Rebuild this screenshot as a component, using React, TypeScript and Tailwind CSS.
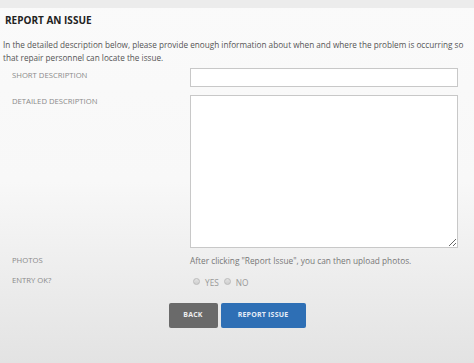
import React, { useState } from 'react';

const font = { fontFamily: '"Open Sans", "Liberation Sans", sans-serif' };

export default function App() {
  const [entryOk, setEntryOk] = useState<string>('');

  return (
    <div
      className="w-[474px] h-[363px] overflow-hidden bg-gradient-to-b from-[#fafafa] via-[#f8f8f8] to-[#e3e3e3] text-[#333]"
      style={font}
    >
      {/* top strip */}
      <div className="h-[8px] bg-[#ececec]" />

      <div className="pl-[5px]">
        <h1 className="mt-[5px] text-[10px] font-bold leading-[14px] text-[#222]">REPORT AN ISSUE</h1>

        <p className="mt-[11px] text-[8.2px] leading-[13px] text-[#555] -ml-[2px]">
          In the detailed description below, please provide enough information about when and where the problem is occurring so
          that repair personnel can locate the issue.
        </p>
      </div>

      {/* form rows */}
      <div className="mt-[4px] grid grid-cols-[190px_268px] gap-y-[8px] text-[7.7px] text-[#8a8a8a]">
        <label className="pl-[12px] pt-[2px] leading-[10px]">SHORT DESCRIPTION</label>
        <input className="h-[19px] bg-white border border-[#c8c8c8] outline-none" />

        <label className="pl-[12px] pt-[1px] leading-[10px]">DETAILED DESCRIPTION</label>
        <textarea className="h-[153px] bg-white border border-[#c8c8c8] outline-none resize-y" />
      </div>

      <div className="mt-[7px] grid grid-cols-[190px_268px] gap-y-[9px] text-[7.7px] text-[#8a8a8a]">
        <span className="pl-[12px] leading-[11px]">PHOTOS</span>
        <span className="text-[8.3px] leading-[11px] text-[#777]">
          After clicking "Report Issue", you can then upload photos.
        </span>

        <span className="pl-[12px] leading-[11px]">ENTRY OK?</span>
        <div className="flex items-center gap-[4px] pl-[3px] leading-[11px] text-[8.3px] text-[#999]">
          <label className="flex items-center gap-[5px]">
            <span
              onClick={() => setEntryOk('yes')}
              className="w-[7px] h-[7px] rounded-full border border-[#bbb] bg-gradient-to-b from-[#e2e2e2] to-[#cfcfcf]"
            />
            <span className="mt-[2px]">YES</span>
          </label>
          <label className="flex items-center gap-[5px] ml-[1px]">
            <span
              onClick={() => setEntryOk('no')}
              className="w-[7px] h-[7px] rounded-full border border-[#bbb] bg-gradient-to-b from-[#e2e2e2] to-[#cfcfcf]"
            />
            <span className="mt-[2px]">NO</span>
          </label>
          {entryOk && <span className="sr-only">{entryOk}</span>}
        </div>
      </div>

      <div className="mt-[15px] flex justify-center gap-[3px]">
        <button className="w-[49px] h-[25px] rounded-[2px] bg-[#6a6a6a] text-[#eee] text-[7px] font-bold tracking-[0.2px]">
          BACK
        </button>
        <button className="w-[85px] h-[25px] rounded-[2px] bg-[#2e6fb5] text-[#e4ecf7] text-[7px] font-bold tracking-[0.2px]">
          REPORT ISSUE
        </button>
      </div>
    </div>
  );
}
